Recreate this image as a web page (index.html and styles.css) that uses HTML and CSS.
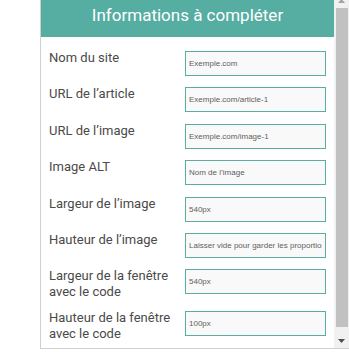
FILE: index.html
```html
<!DOCTYPE html>
<html lang="fr">
<head>
    <meta charset="UTF-8">
    <meta name="viewport" content="width=device-width, initial-scale=1.0">
    <title>Informations à compléter</title>
    <link rel="stylesheet" href="styles.css">
</head>
<body>
    <div class="frame">
        <div class="panel">
            <div class="panel-header">Informations à compléter</div>
            <form class="info-form">
                <div class="form-row">
                    <label for="site">Nom du site</label>
                    <input type="text" id="site" placeholder="Exemple.com">
                </div>
                <div class="form-row">
                    <label for="article">URL de l’article</label>
                    <input type="text" id="article" placeholder="Exemple.com/article-1">
                </div>
                <div class="form-row">
                    <label for="image">URL de l’image</label>
                    <input type="text" id="image" placeholder="Exemple.com/image-1">
                </div>
                <div class="form-row">
                    <label for="alt">Image ALT</label>
                    <input type="text" id="alt" placeholder="Nom de l’image">
                </div>
                <div class="form-row">
                    <label for="img-width">Largeur de l’image</label>
                    <input type="text" id="img-width" placeholder="540px">
                </div>
                <div class="form-row">
                    <label for="img-height">Hauteur de l’image</label>
                    <input type="text" id="img-height" placeholder="Laisser vide pour garder les proportions">
                </div>
                <div class="form-row">
                    <label for="win-width">Largeur de la fenêtre avec le code</label>
                    <input type="text" id="win-width" placeholder="540px">
                </div>
                <div class="form-row">
                    <label for="win-height">Hauteur de la fenêtre avec le code</label>
                    <input type="text" id="win-height" placeholder="100px">
                </div>
            </form>
        </div>
        <div class="scrollbar">
            <div class="scroll-btn">
                <svg width="7" height="4" viewBox="0 0 7 4"><polygon points="0,4 7,4 3.5,0" fill="#a3a3a3"/></svg>
            </div>
            <div class="scroll-track">
                <div class="scroll-thumb"></div>
            </div>
            <div class="scroll-btn">
                <svg width="7" height="4" viewBox="0 0 7 4"><polygon points="0,0 7,0 3.5,4" fill="#505050"/></svg>
            </div>
        </div>
    </div>
</body>
</html>
```

FILE: styles.css
```css
body {
    margin: 0;
    padding: 0;
    overflow: hidden;
    background-color: white;
    font-family: Roboto, "Liberation Sans", sans-serif;
}

.frame {
    display: flex;
    margin-left: 40px;
    margin-top: -7px;
    height: 355px;
    border-left: 1px solid #d0d0d0;
    border-bottom: 1px solid #d0d0d0;
    overflow: hidden;
    background-color: white;
}

.panel {
    flex: 1;
    overflow: hidden;
}

.panel-header {
    height: 44px;
    line-height: 44px;
    background-color: #56ada1;
    color: white;
    font-size: 17px;
    text-align: center;
}

.info-form {
    padding: 13px 8px 20px 8px;
}

.form-row {
    display: flex;
    align-items: flex-start;
    min-height: 27px;
    margin-bottom: 9.4px;
}

.form-row label {
    width: 136px;
    flex-shrink: 0;
    font-size: 13px;
    line-height: 16px;
    color: #4a4a4a;
    padding-right: 10px;
    box-sizing: border-box;
}

.form-row input {
    width: 141px;
    height: 25px;
    margin-top: 1px;
    padding: 0 3px;
    box-sizing: border-box;
    border: 1px solid #5aaea1;
    border-radius: 0;
    background-color: #f9f9f9;
    font-family: "Liberation Sans", Arial, sans-serif;
    font-size: 8px;
    color: #555;
    outline: none;
}

.form-row input::placeholder {
    color: #5e5e5e;
}

/* fake classic scrollbar */
.scrollbar {
    width: 15px;
    display: flex;
    flex-direction: column;
    background-color: #f1f1f1;
}

.scroll-btn {
    height: 15px;
    display: flex;
    align-items: center;
    justify-content: center;
}

.scroll-track {
    flex: 1;
    padding-bottom: 6px;
    display: flex;
}

.scroll-thumb {
    flex: 1;
    margin: 0 1px 0 2px;
    background-color: #c1c1c1;
}
```
